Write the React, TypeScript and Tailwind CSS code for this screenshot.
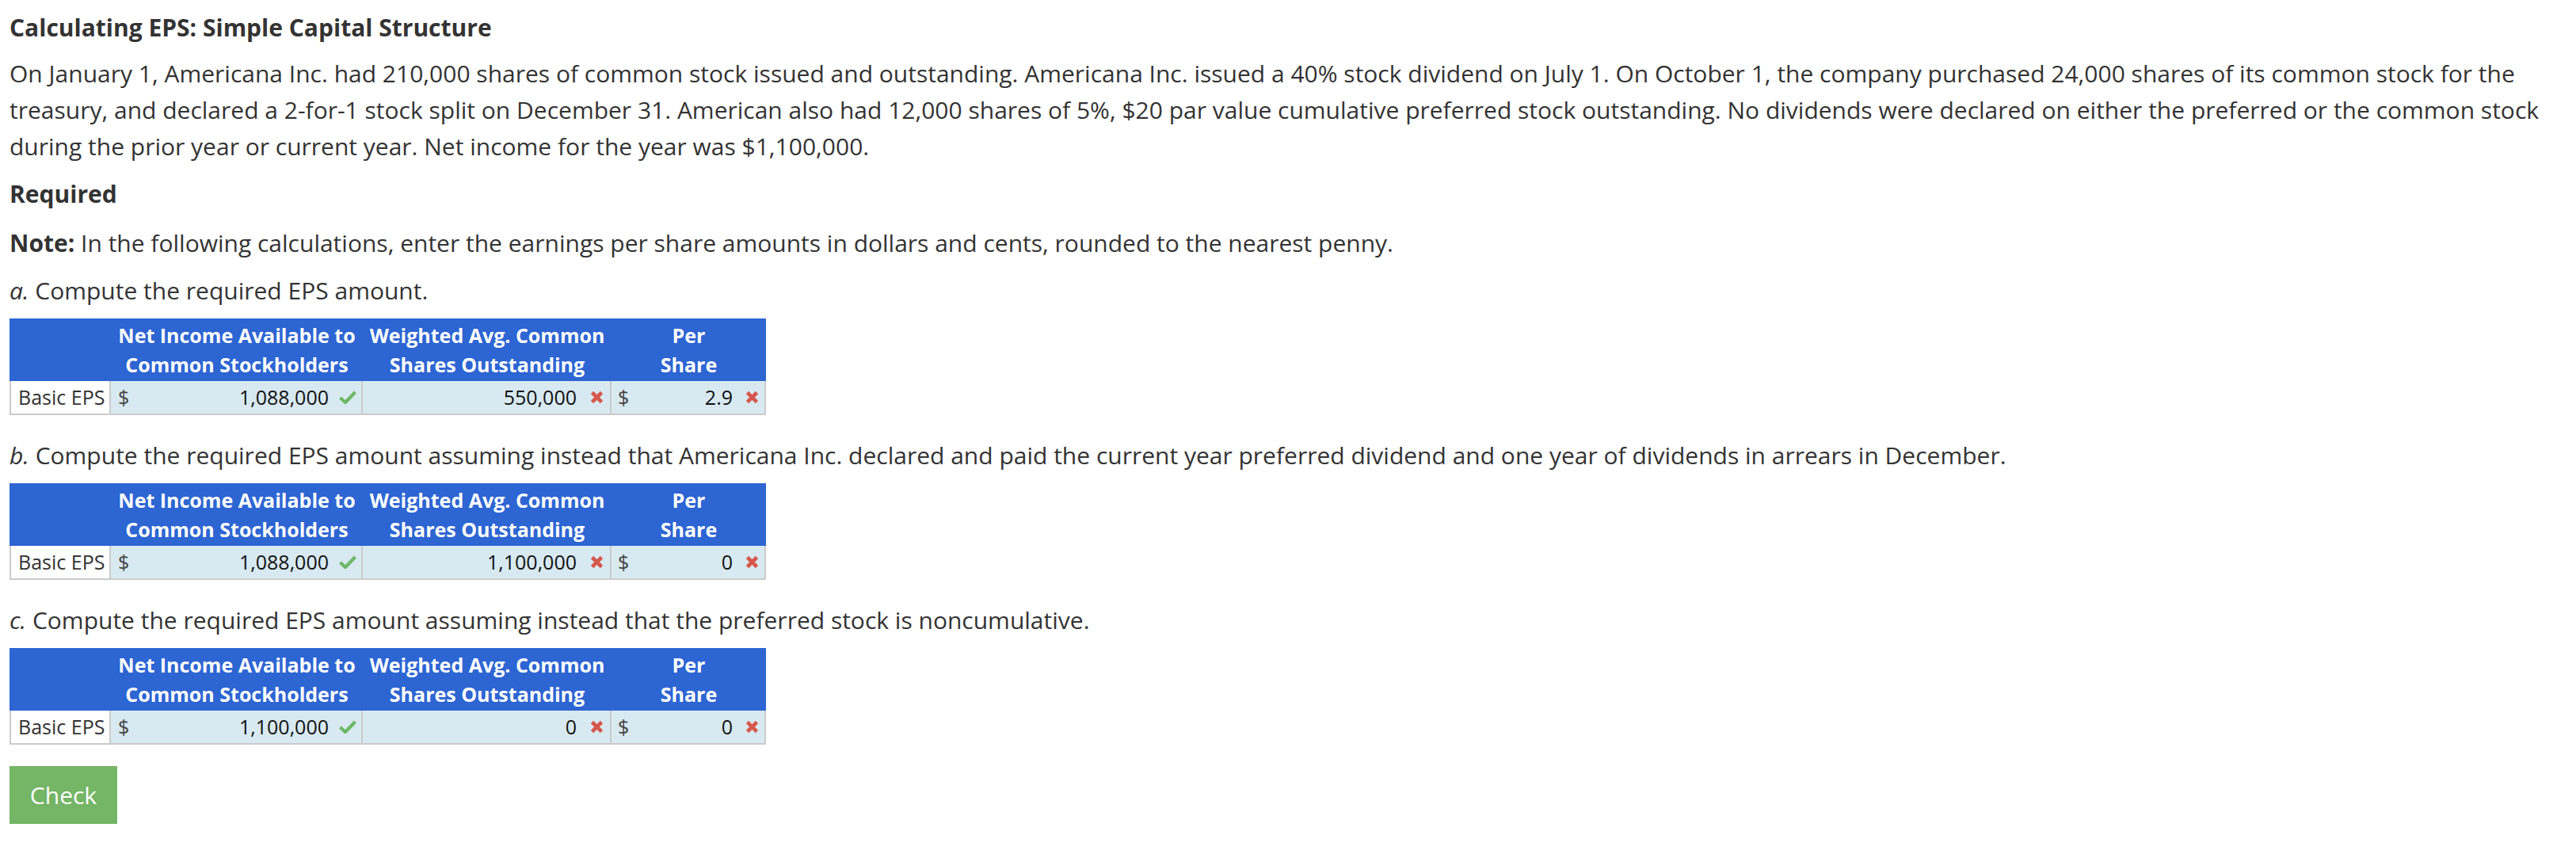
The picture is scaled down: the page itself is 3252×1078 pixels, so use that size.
import React from 'react'

type Mark = 'ok' | 'bad'

interface EpsRow {
    income: string
    incomeMark: Mark
    shares: string
    sharesMark: Mark
    perShare: string
    perShareMark: Mark
}

const parts: { letter: string; prompt: string; row: EpsRow }[] = [
    {
        letter: 'a.',
        prompt: 'Compute the required EPS amount.',
        row: { income: '1,088,000', incomeMark: 'ok', shares: '550,000', sharesMark: 'bad', perShare: '2.9', perShareMark: 'bad' },
    },
    {
        letter: 'b.',
        prompt: 'Compute the required EPS amount assuming instead that Americana Inc. declared and paid the current year preferred dividend and one year of dividends in arrears in December.',
        row: { income: '1,088,000', incomeMark: 'ok', shares: '1,100,000', sharesMark: 'bad', perShare: '0', perShareMark: 'bad' },
    },
    {
        letter: 'c.',
        prompt: 'Compute the required EPS amount assuming instead that the preferred stock is noncumulative.',
        row: { income: '1,100,000', incomeMark: 'ok', shares: '0', sharesMark: 'bad', perShare: '0', perShareMark: 'bad' },
    },
]

function MarkIcon({ mark }: { mark: Mark }) {
    if (mark === 'ok') {
        return (
            <svg width="22" height="17" viewBox="0 0 22 17" className="shrink-0">
                <path d="M1.5 9 L8 15 L20.5 2" fill="none" stroke="#6cb866" strokeWidth="4.2" strokeLinejoin="miter" />
            </svg>
        )
    }
    return (
        <svg width="17" height="17" viewBox="0 0 17 17" className="shrink-0">
            <path d="M2.5 2.5 L14.5 14.5 M14.5 2.5 L2.5 14.5" fill="none" stroke="#d6584c" strokeWidth="4.6" />
        </svg>
    )
}

function EpsTable({ row }: { row: EpsRow }) {
    return (
        <div className="w-[955px]">
            {/* Header */}
            <div className="grid grid-cols-[128px_318px_314px_195px] bg-[#2d65d3] text-white font-bold text-[25px] leading-[37px] text-center pt-[3px] pb-[2px]">
                <div />
                <div>Net Income Available to<br />Common Stockholders</div>
                <div>Weighted Avg. Common<br />Shares Outstanding</div>
                <div>Per<br />Share</div>
            </div>

            {/* Row */}
            <div className="grid grid-cols-[128px_318px_314px_195px] text-[25px] h-[43px] leading-[41px]">
                <div className="bg-white border-l-2 border-r-2 border-b-2 border-[#cbcbcb] pl-[9px] text-[#333]">Basic EPS</div>
                <div className="bg-[#d8e9f1] border-r-2 border-b-2 border-[#cbcbcb] flex items-center pl-[9px] pr-[6px]">
                    <span className="text-[#444]">$</span>
                    <span className="flex-1 text-right text-[#111] pr-[13px]">{row.income}</span>
                    <MarkIcon mark={row.incomeMark} />
                </div>
                <div className="bg-[#d8e9f1] border-r-2 border-b-2 border-[#cbcbcb] flex items-center pl-[9px] pr-[8px]">
                    <span className="flex-1 text-right text-[#111] pr-[17px]">{row.shares}</span>
                    <MarkIcon mark={row.sharesMark} />
                </div>
                <div className="bg-[#d8e9f1] border-r-2 border-b-2 border-[#cbcbcb] flex items-center pl-[8px] pr-[7px]">
                    <span className="text-[#444]">$</span>
                    <span className="flex-1 text-right text-[#111] pr-[16px]">{row.perShare}</span>
                    <MarkIcon mark={row.perShareMark} />
                </div>
            </div>
        </div>
    )
}

export default function App() {
    return (
        <div className="min-h-screen bg-white text-[#333] px-[12px] pt-[12px] text-[30px] leading-[46px]" style={{ fontFamily: '"Open Sans", "Noto Sans", sans-serif' }}>
            <h1 className="font-bold">Calculating EPS: Simple Capital Structure</h1>

            <p className="mt-[12px]">
                On January 1, Americana Inc. had 210,000 shares of common stock issued and outstanding. Americana Inc. issued a 40% stock dividend on July 1. On October 1, the company purchased 24,000 shares of its common stock for the treasury, and declared a 2-for-1 stock split on December 31. American also had 12,000 shares of 5%, $20 par value cumulative preferred stock outstanding. No dividends were declared on either the preferred or the common stock during the prior year or current year. Net income for the year was $1,100,000.
            </p>

            <p className="mt-[14px] font-bold">Required</p>

            <p className="mt-[16px]">
                <span className="font-bold">Note:</span> In the following calculations, enter the earnings per share amounts in dollars and cents, rounded to the nearest penny.
            </p>

            {parts.map((part, i) => (
                <div key={part.letter} className={i === 0 ? 'mt-[14px]' : 'mt-[28px]'}>
                    <p>
                        <em>{part.letter}</em> {part.prompt}
                    </p>
                    <div className="mt-[12px]">
                        <EpsTable row={part.row} />
                    </div>
                </div>
            ))}

            <button className="mt-[27px] w-[136px] h-[73px] bg-[#74b566] text-white text-[30px]">
                Check
            </button>
        </div>
    )
}
